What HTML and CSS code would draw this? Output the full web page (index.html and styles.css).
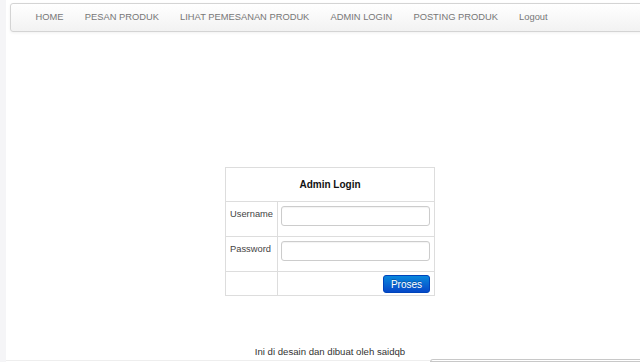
FILE: index.html
```html
<!DOCTYPE html>
<html lang="en">
<head>
    <meta charset="UTF-8">
    <meta name="viewport" content="width=device-width, initial-scale=1.0">
    <title>Admin Login</title>
    <link rel="stylesheet" href="styles.css">
</head>
<body>
    <div class="side-strip"></div>

    <div class="page">
        <div class="navbar">
            <ul class="nav">
                <li><a href="#">HOME</a></li>
                <li><a href="#">PESAN PRODUK</a></li>
                <li><a href="#">LIHAT PEMESANAN PRODUK</a></li>
                <li><a href="#">ADMIN LOGIN</a></li>
                <li><a href="#">POSTING PRODUK</a></li>
                <li><a href="#">Logout</a></li>
            </ul>
        </div>

        <div class="content">
            <form class="login-form" onsubmit="return false;">
                <table class="login-table">
                    <tr>
                        <th colspan="2">Admin Login</th>
                    </tr>
                    <tr>
                        <td class="label">Username</td>
                        <td class="field"><input type="text" name="username"></td>
                    </tr>
                    <tr>
                        <td class="label">Password</td>
                        <td class="field"><input type="password" name="password"></td>
                    </tr>
                    <tr class="action-row">
                        <td class="label"></td>
                        <td class="field action"><button type="submit">Proses</button></td>
                    </tr>
                </table>
            </form>

            <p class="credit">Ini di desain dan dibuat oleh saidqb</p>
        </div>

        <div class="bottom-bar">
            <div class="bar-line"></div>
            <div class="bar-box"></div>
        </div>
    </div>
</body>
</html>
```

FILE: styles.css
```css
:root {
    --nav-text: #777777;
    --nav-border: #d4d4d4;
    --cell-border: #dddddd;
    --text: #333333;
}

html, body {
    height: 100%;
}

body {
    margin: 0;
    display: flex;
    background: #ffffff;
    font-family: 'Liberation Sans', Arial, sans-serif;
    font-size: 9.33px;
    color: var(--text);
    overflow: hidden;
}

.side-strip {
    flex: 0 0 6px;
    background: #f5f5f7;
}

.page {
    flex: 1;
    display: flex;
    flex-direction: column;
    padding-left: 4px;
    overflow: hidden;
}

/* top navigation */
.navbar {
    margin-top: 3px;
    margin-right: -20px;
    height: 27px;
    border: 1px solid var(--nav-border);
    border-radius: 3px;
    background: linear-gradient(to bottom, #ffffff, #f2f2f2);
    box-shadow: 0 1px 3px rgba(0, 0, 0, 0.06);
}

.nav {
    list-style: none;
    margin: 0;
    padding: 0 0 0 14px;
    display: flex;
    height: 100%;
    align-items: center;
}

.nav a {
    display: block;
    padding: 0 10.6px;
    color: var(--nav-text);
    text-decoration: none;
    line-height: 27px;
}

.nav a:hover {
    color: #333333;
}

/* login box */
.content {
    width: 210px;
    margin-left: 215px;
    margin-top: 135px;
}

.login-table {
    width: 210px;
    border-collapse: collapse;
}

.login-table th,
.login-table td {
    border: 1px solid var(--cell-border);
}

.login-table th {
    height: 33px;
    padding: 0;
    font-size: 10px;
    font-weight: bold;
    color: #111111;
    text-align: center;
}

.login-table .label {
    width: 47px;
    padding: 5px 0 0 4px;
    vertical-align: top;
    line-height: 14px;
    color: #444444;
}

.login-table .field {
    padding: 4px 4px 10px 3px;
    vertical-align: top;
}

.login-table input {
    display: block;
    box-sizing: border-box;
    width: 149px;
    height: 20px;
    margin: 0;
    border: 1px solid #cccccc;
    border-radius: 3px;
    box-shadow: inset 0 1px 1px rgba(0, 0, 0, 0.05);
    font-family: inherit;
    font-size: 9.33px;
}

.action-row .label,
.action-row .field {
    height: 24px;
    padding-top: 3px;
    padding-bottom: 0;
    box-sizing: border-box;
}

.login-table .action {
    text-align: right;
}

.login-table button {
    height: 18px;
    width: 47px;
    padding: 0;
    border: 1px solid #0044bb;
    border-radius: 3px;
    background: linear-gradient(to bottom, #0a88dd, #0648c8);
    color: #ffffff;
    font-family: inherit;
    font-size: 10px;
    text-shadow: 0 -1px 0 rgba(0, 0, 0, 0.25);
    cursor: pointer;
}

.credit {
    margin: 50px 0 0;
    line-height: 12px;
    font-size: 9.6px;
    text-align: center;
    color: #333333;
}

/* strip at the bottom edge */
.bottom-bar {
    display: flex;
    margin-top: 1px;
    margin-left: -10px;
    margin-right: -20px;
    height: 10px;
}

.bar-line {
    flex: 0 0 430px;
    margin-top: 1px;
    border-top: 1px solid #eeeeee;
}

.bar-box {
    flex: 1;
    border: 1px solid #c8c8c8;
    border-radius: 3px 0 0 0;
}
```
